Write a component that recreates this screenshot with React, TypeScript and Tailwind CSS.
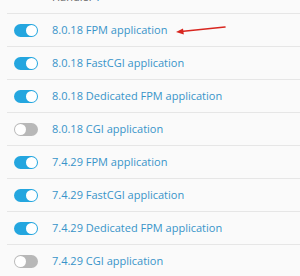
const handlers = [
  { label: "8.0.18 FPM application", on: true, arrow: true },
  { label: "8.0.18 FastCGI application", on: true },
  { label: "8.0.18 Dedicated FPM application", on: true },
  { label: "8.0.18 CGI application", on: false },
  { label: "7.4.29 FPM application", on: true },
  { label: "7.4.29 FastCGI application", on: true },
  { label: "7.4.29 Dedicated FPM application", on: true },
  { label: "7.4.29 CGI application", on: false },
];

function Toggle({ on }: { on: boolean }) {
  return (
    <div
      className={
        on
          ? "flex h-[13px] w-6 shrink-0 items-center justify-end rounded-full bg-[#24a6df] px-[1px]"
          : "flex h-[13px] w-6 shrink-0 items-center justify-start rounded-full bg-[#b8b8b8] px-[1px]"
      }
    >
      <div className="h-[11px] w-[11px] rounded-full bg-white" />
    </div>
  );
}

function Arrow() {
  return (
    <svg width="52" height="12" viewBox="0 0 52 12" className="ml-2 shrink-0">
      <line x1="6" y1="7.5" x2="50" y2="3" stroke="#d8261f" strokeWidth="1.6" strokeLinecap="round" />
      <path d="M1 8 L8 4.6 L8.8 10.6 Z" fill="#d8261f" />
    </svg>
  );
}

export default function App() {
  return (
    <div className="h-[276px] w-[300px] overflow-hidden bg-[#fafafa] pl-[7px] font-['Open_Sans',sans-serif]">
      <div className="h-[13px] overflow-hidden pl-[45px]">
        <div className="-mt-[9px] text-[11px] leading-[11px] text-[#666]">
          Handler <span className="text-[#3592c8]">?</span>
        </div>
      </div>
      {handlers.map((h, i) => (
        <div
          key={i}
          className="flex h-[33px] items-center gap-[14px] border-t border-[#e6e6e6] pl-[7px]"
        >
          <Toggle on={h.on} />
          <div className="flex items-center">
            <span className="text-[11px] whitespace-nowrap text-[#3894c9]">{h.label}</span>
            {h.arrow && <Arrow />}
          </div>
        </div>
      ))}
    </div>
  );
}
